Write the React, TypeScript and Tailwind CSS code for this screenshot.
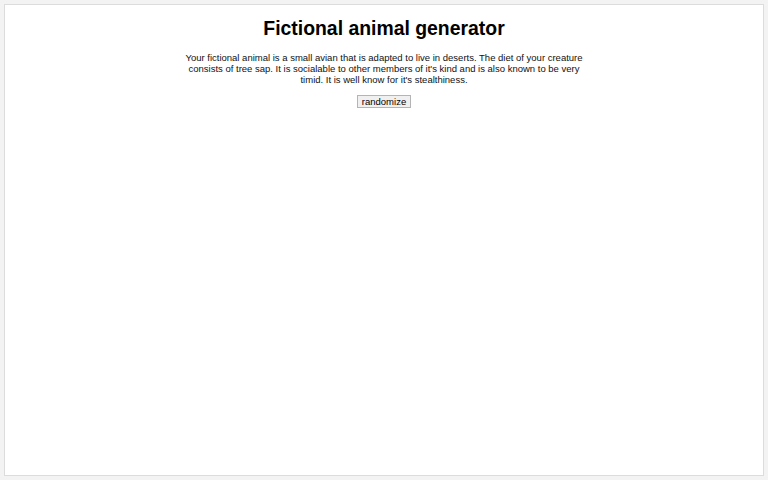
export default function App() {
  return (
    <div className="h-[480px] w-[768px] bg-[#f3f3f3] p-[4px] font-['Liberation_Sans',Arial,sans-serif] text-black">
      <div className="flex h-full flex-col items-center border border-[#dcdcdc] bg-white">
        <h1 className="mt-[11px] text-[19.4px] font-bold leading-[24px]">Fictional animal generator</h1>
        <p className="mt-[12px] w-[406px] text-center text-[9.5px] leading-[11px] text-[#111]">
          Your fictional animal is a small avian that is adapted to live in deserts. The diet of your creature
          consists of tree sap. It is socialable to other members of it's kind and is also known to be very
          timid. It is well know for it's stealthiness.
        </p>
        <button className="mt-[10px] border border-[#b4b4b4] bg-[#f0f0f0] px-[4px] text-[9.5px] leading-[11px]">
          randomize
        </button>
      </div>
    </div>
  );
}
